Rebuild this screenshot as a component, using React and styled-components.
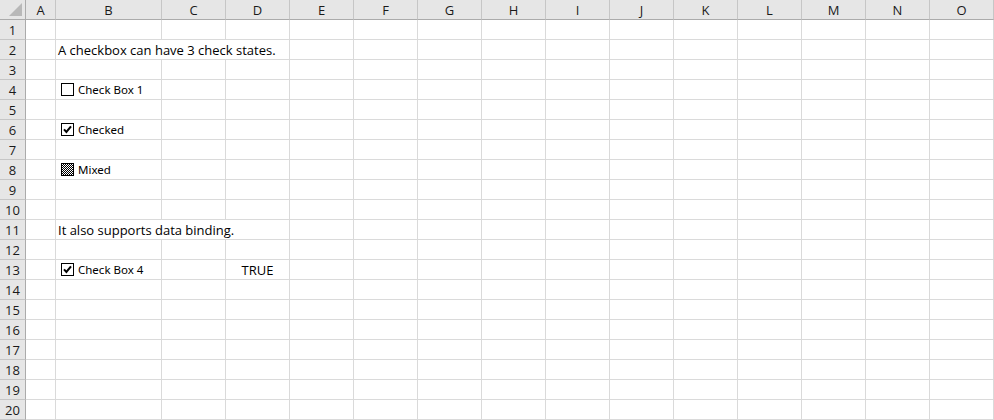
import styled, { createGlobalStyle } from "styled-components";

const GlobalStyle = createGlobalStyle`
    html, body {
        margin: 0;
        padding: 0;
        background: #ffffff;
    }
`;

const columns = ["A", "B", "C", "D", "E", "F", "G", "H", "I", "J", "K", "L", "M", "N", "O"];
const rows = Array.from({ length: 20 }, (_, i) => i + 1);

const CheckIcon = () => (
    <svg width="9" height="9" viewBox="0 0 9 9">
        <path d="M1 4.3 L3.4 7 L8 1.3" fill="none" stroke="#000" strokeWidth="2" />
    </svg>
);

const CheckControl = ({ state, label }) => (
    <Control>
        <Box $mixed={state === "mixed"}>
            {state === "checked" && <CheckIcon />}
        </Box>
        <Label>{label}</Label>
    </Control>
);

const content = {
    2: { B: { text: "A checkbox can have 3 check states.", span: 3 } },
    4: { B: { control: { state: "off", label: "Check Box 1" } } },
    6: { B: { control: { state: "checked", label: "Checked" } } },
    8: { B: { control: { state: "mixed", label: "Mixed" } } },
    11: { B: { text: "It also supports data binding.", span: 3 } },
    13: {
        B: { control: { state: "checked", label: "Check Box 4" } },
        D: { text: "TRUE", center: true },
    },
};

const App = () => {
    return (
        <>
            <GlobalStyle />
            <Sheet>
                <Corner>
                    <Triangle />
                </Corner>
                {columns.map(c => (
                    <ColHead key={c}>{c}</ColHead>
                ))}
                {rows.map(r => {
                    const rowData = content[r] || {};
                    const cells = [];
                    let skip = 0;
                    columns.forEach(c => {
                        if (skip > 0) {
                            skip--;
                            return;
                        }
                        const cell = rowData[c];
                        if (cell && cell.span) skip = cell.span - 1;
                        cells.push(
                            <Cell key={c} $span={cell?.span || 1} $center={cell?.center}>
                                {cell?.text}
                                {cell?.control && <CheckControl {...cell.control} />}
                            </Cell>
                        );
                    });
                    return [
                        <RowHead key={"h" + r}>{r}</RowHead>,
                        ...cells,
                    ];
                })}
            </Sheet>
        </>
    );
};

const Sheet = styled.div`
    display: grid;
    grid-template-columns: 26px 30px 106px repeat(13, 64px);
    grid-auto-rows: 20px;
    width: 994px;
    font-family: "Open Sans", "Noto Sans", sans-serif;
    color: #000;
`;

const Corner = styled.div`
    position: relative;
    background: #e6e6e6;
    border-right: 1px solid #ababab;
    border-bottom: 1px solid #ababab;
    box-sizing: border-box;
`;

const Triangle = styled.div`
    position: absolute;
    right: 3px;
    bottom: 3px;
    width: 0;
    height: 0;
    border-left: 13px solid transparent;
    border-bottom: 13px solid #b8b8b8;
`;

const ColHead = styled.div`
    background: #e6e6e6;
    border-right: 1px solid #c6c6c6;
    border-bottom: 1px solid #ababab;
    box-sizing: border-box;
    display: flex;
    align-items: center;
    justify-content: center;
    font-size: 13px;
    color: #1a1a1a;
`;

const RowHead = styled.div`
    background: #e6e6e6;
    border-right: 1px solid #ababab;
    border-bottom: 1px solid #c6c6c6;
    box-sizing: border-box;
    display: flex;
    align-items: center;
    justify-content: center;
    font-size: 13px;
    color: #1a1a1a;
`;

const Cell = styled.div`
    grid-column: span ${({ $span }) => $span};
    border-right: 1px solid #dadada;
    border-bottom: 1px solid #dadada;
    box-sizing: border-box;
    display: flex;
    align-items: center;
    justify-content: ${({ $center }) => ($center ? "center" : "flex-start")};
    padding: 0 2px;
    font-size: 13px;
    white-space: nowrap;
    overflow: visible;
`;

const Control = styled.div`
    display: flex;
    align-items: center;
    gap: 4px;
    padding-left: 3px;
`;

const Box = styled.div`
    width: 13px;
    height: 13px;
    box-sizing: border-box;
    border: 1px solid #000;
    background: ${({ $mixed }) =>
        $mixed
            ? "repeating-conic-gradient(#000 0 25%, #fff 0 50%) 0 0 / 2px 2px"
            : "#fff"};
    display: flex;
    align-items: center;
    justify-content: center;
`;

const Label = styled.span`
    font-family: "Noto Sans", "Open Sans", sans-serif;
    font-size: 11.5px;
    color: #000;
`;

export default App;
